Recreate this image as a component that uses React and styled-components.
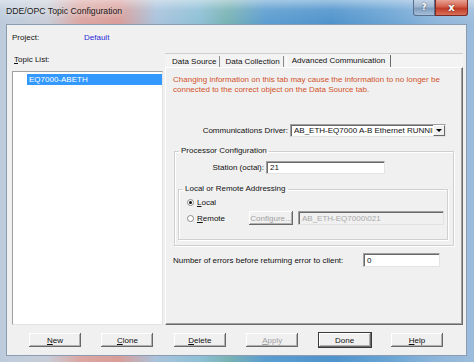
import React from 'react';
import styled, { createGlobalStyle } from 'styled-components';

const GlobalStyle = createGlobalStyle`
  html, body {
    margin: 0;
    padding: 0;
    background: #ffffff;
  }
  body {
    font-family: "Liberation Sans", Arial, sans-serif;
    font-size: 8px;
    color: #111;
  }
  * { box-sizing: border-box; }
`;

const Window = styled.div`
  width: 474px;
  height: 362px;
  display: flex;
  flex-direction: column;
  overflow: hidden;
  background:
    linear-gradient(180deg, rgba(255,255,255,0.45) 0px, rgba(255,255,255,0.1) 10px, rgba(255,255,255,0) 24px),
    linear-gradient(90deg, #bccbdc 0%, #c7cdd8 10%, #dca6a2 17%, #d99d98 25%, #a9c3dc 33%, #8ec0d6 42%, #79b3b4 48%, #5c9dd0 56%, #4f93cc 70%, #6aa4d4 82%, #8db5da 92%, #9cbcdc 100%);
`;

const TitleBar = styled.div`
  height: 24px;
  flex: none;
  display: flex;
  align-items: flex-start;
`;

const TitleText = styled.div`
  padding-left: 6px;
  line-height: 23px;
  font-size: 8.7px;
  color: #1a1a1a;
  text-shadow: 0 0 6px rgba(255,255,255,0.9);
`;

const TitleButtons = styled.div`
  margin-left: auto;
  margin-right: 6px;
  display: flex;
`;

const CaptionButton = styled.div`
  width: ${p => p.$w}px;
  height: 16px;
  display: flex;
  align-items: center;
  justify-content: center;
  color: #fff;
  font-family: "DejaVu Sans", sans-serif;
  font-weight: bold;
  font-size: ${p => (p.$close ? 10 : 8)}px;
  border: 1px solid ${p => (p.$close ? '#7a2a24' : '#59708c')};
  border-top: none;
  border-radius: 0 0 ${p => (p.$close ? '3px' : '0')} ${p => (p.$close ? '0' : '3px')};
  background: ${p => (p.$close
    ? 'linear-gradient(180deg, #e8a293 0%, #d2604c 45%, #c03a26 55%, #d8715a 100%)'
    : 'linear-gradient(180deg, #c3d4e7 0%, #9fb6d0 45%, #7f9cbd 55%, #a6bfd8 100%)')};
  text-shadow: 0 0 2px rgba(0,0,0,0.6);
`;

const Client = styled.div`
  flex: 1;
  margin: 0 7px 6px 6px;
  background: #f0f0f0;
  border: 1px solid #8a9cb0;
  display: flex;
  flex-direction: column;
`;

const ProjectRow = styled.div`
  margin-top: 7px;
  height: 10px;
  padding-left: 5px;
  display: flex;
  align-items: center;
`;

const ProjectLabel = styled.span`
  width: 72px;
`;

const ProjectValue = styled.span`
  color: #2a2ad8;
`;

const MainRow = styled.div`
  margin-top: 11px;
  flex: 1;
  padding: 0 3px 0 5px;
  display: flex;
  gap: 2px;
`;

const LeftCol = styled.div`
  width: 151px;
  display: flex;
  flex-direction: column;
`;

const ListLabel = styled.div`
  height: 12px;
  padding-left: 2px;
  display: flex;
  align-items: center;
  margin-bottom: 6px;
`;

const ListBox = styled.div`
  flex: 1;
  background: #fff;
  border: 1px solid;
  border-color: #a0a0a0 #e3e3e3 #e3e3e3 #a0a0a0;
  padding: 2px 0 0 14px;
`;

const ListItem = styled.div`
  height: 11px;
  line-height: 11px;
  padding-left: 2px;
  background: ${p => (p.$selected ? '#3399ff' : 'transparent')};
  color: ${p => (p.$selected ? '#fff' : '#111')};
`;

const TabControl = styled.div`
  width: 298px;
  display: flex;
  flex-direction: column;
`;

const TabStrip = styled.div`
  height: 14px;
  flex: none;
  border-top: 1px solid #cfcfcf;
  background: #f3f3f3;
  display: flex;
  align-items: stretch;
  padding-left: 2px;
`;

const Tab = styled.div`
  padding: 0 3px 0 4px;
  display: flex;
  align-items: center;
  border-right: 1px solid ${p => (p.$active ? '#6a6a6a' : '#8a8a8a')};
  border-left: 1px solid ${p => (p.$active ? '#fff' : 'transparent')};
  margin: ${p => (p.$active ? '1px 0 0 2px' : '2px 0 0 0')};
  padding-bottom: ${p => (p.$active ? '2px' : '0')};
  ${p => p.$active && 'padding-left: 5px; padding-right: 5px;'}
`;

const Panel = styled.div`
  flex: 1;
  border: 1px solid;
  border-color: #fff #6a6a6a #6a6a6a #fff;
  box-shadow: inset -1px -1px 0 #a0a0a0;
  padding: 7px 8px 0 7px;
  display: flex;
  flex-direction: column;
`;

const Warning = styled.div`
  color: #d2522a;
  line-height: 10px;
`;

const FieldRow = styled.div`
  display: flex;
  align-items: center;
  margin-top: ${p => p.$mt || 0}px;
  margin-left: ${p => p.$ml || 0}px;
`;

const FieldLabel = styled.span`
  width: ${p => p.$w}px;
  text-align: ${p => p.$align || 'right'};
  padding-right: 2px;
  flex: none;
`;

const TextBox = styled.div`
  width: ${p => p.$w}px;
  height: ${p => p.$h || 13}px;
  background: ${p => (p.$disabled ? '#f0f0f0' : '#fff')};
  color: ${p => (p.$disabled ? '#a8a8a8' : '#111')};
  border: 1px solid;
  border-color: #a0a0a0 #e3e3e3 #e3e3e3 #a0a0a0;
  box-shadow: inset 1px 1px 0 #696969;
  padding-left: 3px;
  display: flex;
  align-items: center;
  white-space: nowrap;
  overflow: hidden;
`;

const Select = styled.div`
  width: 156px;
  height: 13px;
  background: #fff;
  border: 1px solid;
  border-color: #a0a0a0 #e3e3e3 #e3e3e3 #a0a0a0;
  box-shadow: inset 1px 1px 0 #696969;
  display: flex;
  align-items: center;
  padding-left: 3px;
`;

const SelectText = styled.span`
  flex: 1;
  white-space: nowrap;
  overflow: hidden;
`;

const DropButton = styled.span`
  width: 12px;
  height: 11px;
  flex: none;
  margin-right: 0;
  background: #f0f0f0;
  border: 1px solid;
  border-color: #fff #696969 #696969 #fff;
  display: flex;
  align-items: center;
  justify-content: center;
  &::after {
    content: '';
    border-left: 3px solid transparent;
    border-right: 3px solid transparent;
    border-top: 3px solid #000;
  }
`;

const Group = styled.fieldset`
  margin: ${p => p.$m};
  padding: 0;
  border: 1px solid #d0d0d0;
  box-shadow: 1px 1px 0 #fff, inset 1px 1px 0 #fff;
  min-width: 0;
  height: ${p => p.$h}px;
`;

const Legend = styled.legend`
  margin-left: 4px;
  padding: 0 2px;
  line-height: 10px;
`;

const Radio = styled.span`
  width: 7px;
  height: 7px;
  border-radius: 50%;
  border: 1px solid #8a8a8a;
  background: #fff;
  display: inline-flex;
  align-items: center;
  justify-content: center;
  margin: 0 3px 0 0;
  &::after {
    content: '';
    width: 3px;
    height: 3px;
    border-radius: 50%;
    background: ${p => (p.$checked ? '#111' : 'transparent')};
  }
`;

const RadioLabel = styled.span`
  width: 51px;
`;

const Button = styled.div`
  width: ${p => p.$w || 54}px;
  height: 16px;
  flex: none;
  display: flex;
  align-items: center;
  justify-content: center;
  background: #f0f0f0;
  color: ${p => (p.$disabled ? '#a0a0a0' : '#111')};
  border: 1px solid ${p => (p.$default ? '#3a3a3a' : '#f0f0f0')};
  box-shadow: inset -1px -1px 0 #696969, inset 1px 1px 0 #fff, inset -2px -2px 0 #b0b0b0;
`;

const ButtonRow = styled.div`
  margin: 7px 0 7px;
  height: 16px;
  padding-left: 21px;
  display: flex;
  gap: 18.4px;
`;

const U = styled.span`
  text-decoration: underline;
`;

export default function App() {
  return (
    <>
      <GlobalStyle />
      <Window>
        <TitleBar>
          <TitleText>DDE/OPC Topic Configuration</TitleText>
          <TitleButtons>
            <CaptionButton $w={22}>?</CaptionButton>
            <CaptionButton $w={33} $close>x</CaptionButton>
          </TitleButtons>
        </TitleBar>
        <Client>
          <ProjectRow>
            <ProjectLabel>Project:</ProjectLabel>
            <ProjectValue>Default</ProjectValue>
          </ProjectRow>
          <MainRow>
            <LeftCol>
              <ListLabel><span><U>T</U>opic List:</span></ListLabel>
              <ListBox>
                <ListItem $selected>EQ7000-ABETH</ListItem>
              </ListBox>
            </LeftCol>
            <TabControl>
              <TabStrip>
                <Tab>Data Source</Tab>
                <Tab>Data Collection</Tab>
                <Tab $active>Advanced Communication</Tab>
              </TabStrip>
              <Panel>
                <Warning>
                  Changing information on this tab may cause the information to no longer be
                  <br />
                  connected to the correct object on the Data Source tab.
                </Warning>
                <FieldRow $mt={29}>
                  <FieldLabel $w={117}>Communications Driver:</FieldLabel>
                  <Select>
                    <SelectText>AB_ETH-EQ7000 A-B Ethernet RUNNING</SelectText>
                    <DropButton />
                  </Select>
                </FieldRow>
                <Group $m="9px 0 0 1px" $h={100}>
                  <Legend>Processor Configuration</Legend>
                  <FieldRow $mt={5}>
                    <FieldLabel $w={91}>Station (octal):</FieldLabel>
                    <TextBox $w={119}>21</TextBox>
                  </FieldRow>
                  <Group $m="10px 5px 0 3px" $h={56}>
                    <Legend>Local or Remote Addressing</Legend>
                    <FieldRow $mt={4} $ml={8}>
                      <Radio $checked />
                      <RadioLabel><U>L</U>ocal</RadioLabel>
                    </FieldRow>
                    <FieldRow $mt={3} $ml={8}>
                      <Radio />
                      <RadioLabel><U>R</U>emote</RadioLabel>
                      <Button $w={46} $disabled>Configure...</Button>
                      <TextBox $w={146} $h={14} $disabled style={{ marginLeft: 4 }}>AB_ETH-EQ7000\021</TextBox>
                    </FieldRow>
                  </Group>
                </Group>
                <FieldRow $mt={7}>
                  <FieldLabel $w={190} $align="left">Number of errors before returning error to client:</FieldLabel>
                  <TextBox $w={77} $h={14}>0</TextBox>
                </FieldRow>
              </Panel>
            </TabControl>
          </MainRow>
          <ButtonRow>
            <Button><U>N</U>ew</Button>
            <Button><U>C</U>lone</Button>
            <Button><U>D</U>elete</Button>
            <Button $disabled><U>A</U>pply</Button>
            <Button $default>Done</Button>
            <Button><U>H</U>elp</Button>
          </ButtonRow>
        </Client>
      </Window>
    </>
  );
}
